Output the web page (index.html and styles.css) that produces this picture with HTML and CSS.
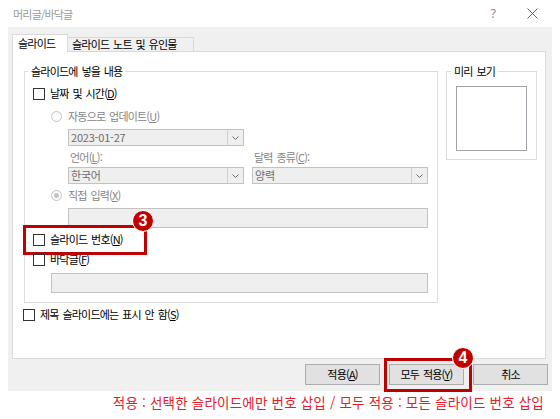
FILE: index.html
```
<!DOCTYPE html>
<html lang="ko">
<head>
<meta charset="utf-8">
<title>머리글/바닥글</title>
<link rel="stylesheet" href="styles.css">
</head>
<body>
<div class="window">
  <div class="titlebar">
    <span class="title">머리글/바닥글</span>
    <span class="help">?</span>
    <svg class="close" width="11" height="11" viewBox="0 0 11 11"><path d="M0.5 0.5 L10.5 10.5 M10.5 0.5 L0.5 10.5" stroke="#606060" stroke-width="1" fill="none"/></svg>
  </div>
  <div class="dialog">
    <div class="tabs">
      <div class="tab active">슬라이드</div>
      <div class="tab">슬라이드 노트 및 유인물</div>
    </div>
    <div class="panel">
      <div class="groups">
        <fieldset class="group content">
          <legend>슬라이드에 넣을 내용</legend>
          <div class="row r1"><span class="cb"></span><span>날짜 및 시간(<u>D</u>)</span></div>
          <div class="row r2 dis"><span class="radio"></span><span>자동으로 업데이트(<u>U</u>)</span></div>
          <div class="select date"><span class="val">2023-01-27</span><span class="arrow"><svg width="7" height="4" viewBox="0 0 7 4"><path d="M0.5 0.5 L3.5 3.5 L6.5 0.5" stroke="#6a6a6a" stroke-width="1" fill="none"/></svg></span></div>
          <div class="cal-grid">
            <span class="lab dis">언어(<u>L</u>):</span>
            <span class="lab dis">달력 종류(<u>C</u>):</span>
            <div class="select"><span class="val">한국어</span><span class="arrow"><svg width="7" height="4" viewBox="0 0 7 4"><path d="M0.5 0.5 L3.5 3.5 L6.5 0.5" stroke="#6a6a6a" stroke-width="1" fill="none"/></svg></span></div>
            <div class="select"><span class="val">양력</span><span class="arrow"><svg width="7" height="4" viewBox="0 0 7 4"><path d="M0.5 0.5 L3.5 3.5 L6.5 0.5" stroke="#6a6a6a" stroke-width="1" fill="none"/></svg></span></div>
          </div>
          <div class="row r3 dis"><span class="radio on"></span><span>직접 입력(<u>X</u>)</span></div>
          <div class="input fixed"></div>
          <div class="row r4"><span class="cb"></span><span>슬라이드 번호(<u>N</u>)</span><span class="frame frame3"></span><span class="badge badge3">3</span></div>
          <div class="row r5"><span class="cb"></span><span>바닥글(<u>F</u>)</span></div>
          <div class="input footer"></div>
        </fieldset>
        <fieldset class="group preview">
          <legend>미리 보기</legend>
          <div class="preview-box"></div>
        </fieldset>
      </div>
      <div class="row title-row"><span class="cb"></span><span>제목 슬라이드에는 표시 안 함(<u>S</u>)</span></div>
    </div>
    <div class="buttons">
      <div class="btn">적용(<u>A</u>)</div>
      <div class="btn all">모두 적용(<u>Y</u>)<span class="frame frame4"></span><span class="badge badge4">4</span></div>
      <div class="btn">취소</div>
    </div>
  </div>
  <p class="caption">적용 : 선택한 슬라이드에만 번호 삽입 / 모두 적용 : 모든 슬라이드 번호 삽입</p>
</div>
</body>
</html>
```
FILE: styles.css
```
* { box-sizing: border-box; }
html, body { margin: 0; padding: 0; background: #fff; }
body {
  width: 560px;
  height: 419px;
  overflow: hidden;
  font-family: "Noto Sans CJK KR", "Noto Sans", sans-serif;
  font-size: 11px;
  letter-spacing: -0.8px;
  word-spacing: 1.5px;
  color: #000;
}
u { text-decoration: underline; text-underline-offset: 1px; text-decoration-thickness: 1px; }

.titlebar {
  height: 27px;
  display: flex;
  align-items: center;
  padding-left: 13px;
}
.title { color: #9a9a9a; line-height: 14px; }
.help {
  margin-left: auto;
  color: #8a8a8a;
  font-family: "Noto Sans", sans-serif;
  font-size: 12px;
  letter-spacing: 0;
}
.close { margin-left: 31px; margin-right: 22px; }

.dialog {
  margin: 0 8px;
  height: 364px;
  background: #f0f0f0;
  padding: 7px 6px 0 4px;
}

.tabs { display: flex; align-items: flex-end; height: 17px; }
.tab {
  height: 14px;
  width: 126px;
  line-height: 12px;
  border-top: 1px solid #d9d9d9;
  border-right: 1px solid #d9d9d9;
  padding-left: 4px;
  background: #f0f0f0;
}
.tab.active {
  position: relative;
  z-index: 1;
  width: 56px;
  height: 18px;
  margin-bottom: -1px;
  line-height: 16px;
  background: #fff;
  border-left: 1px solid #d9d9d9;
  padding-left: 5px;
}

.panel {
  height: 308px;
  background: #fff;
  border: 1px solid #d9d9d9;
  padding: 12px 0 0 11px;
}
.groups { display: flex; align-items: flex-start; gap: 8px; }

.group {
  margin: 0;
  padding: 0;
  min-width: 0;
  border: 1px solid #dcdcdc;
  flex: none;
}
.group legend {
  padding: 0 3px;
  margin-left: 3px;
  line-height: 14px;
  height: 14px;
}
.group.content { width: 414px; padding-bottom: 9px; }
.group.preview { width: 91px; padding-bottom: 8px; }
.group.preview legend { margin-left: 4px; }
.preview-box {
  margin: 8px 0 0 9px;
  width: 71px;
  height: 65px;
  border: 1px solid #a2a2aa;
}

.row {
  position: relative;
  display: flex;
  align-items: center;
  height: 17px;
  line-height: 17px;
}
.dis { color: #858585; }
.cb {
  width: 12px;
  height: 12px;
  border: 1px solid #333;
  background: #fff;
  margin-right: 5px;
  flex: none;
}
.radio {
  width: 11px;
  height: 11px;
  border: 1px solid #c4c4c4;
  border-radius: 50%;
  background: #fbfbfb;
  margin-right: 6px;
  flex: none;
  display: flex;
  align-items: center;
  justify-content: center;
}
.radio.on::after {
  content: "";
  width: 5px;
  height: 5px;
  border-radius: 50%;
  background: #c4c4c4;
}
.r1 { margin-top: 7px; padding-left: 8px; }
.r2 { margin-top: 6px; padding-left: 26px; }
.r3 { margin-top: 3px; padding-left: 26px; }
.r4 { margin-top: 3px; padding-left: 8px; }
.r5 { margin-top: 3px; padding-left: 8px; }

.select {
  display: flex;
  width: 176px;
  height: 17px;
  border: 1px solid #c2c2c2;
  background: #efefef;
  color: #6d6d6d;
}
.select .val { flex: 1; padding-left: 2px; line-height: 15px; letter-spacing: -0.2px; }
.select .arrow {
  flex: none;
  width: 16px;
  border-left: 1px solid #cfcfcf;
  display: flex;
  align-items: center;
  justify-content: center;
}
.select.date { margin: 4px 0 0 43px; }

.cal-grid {
  display: grid;
  grid-template-columns: 176px 176px;
  grid-template-rows: 14px 17px;
  column-gap: 8px;
  row-gap: 3px;
  width: 360px;
  margin: 4px 0 0 43px;
}
.lab { display: block; line-height: 14px; padding-left: 2px; }

.input {
  height: 20px;
  border: 1px solid #c2c2c2;
  background: #efefef;
}
.input.fixed { margin: 4px 0 0 43px; width: 360px; }
.input.footer { margin: 5px 0 0 26px; width: 377px; }

.title-row { margin-top: 3px; margin-left: -1px; }

.frame {
  position: absolute;
  border: 3px solid #c00000;
  pointer-events: none;
}
.frame3 { left: -2px; top: -6px; width: 124px; height: 30px; }
.frame4 { left: -6px; top: -7px; width: 88px; height: 34px; }

.badge {
  position: absolute;
  z-index: 3;
  width: 22px;
  height: 22px;
  border-radius: 50%;
  background: #c00000;
  border: 1px solid #fff;
  color: #fff;
  font-family: "Liberation Sans", "DejaVu Sans", sans-serif;
  font-weight: bold;
  font-size: 16px;
  letter-spacing: 0;
  line-height: 20px;
  text-align: center;
}
.badge3 { left: 107px; top: -21px; }
.badge4 { left: 62px; top: -18px; }

.buttons {
  display: flex;
  justify-content: flex-end;
  gap: 9px;
  margin: 5px -2px 0 0;
}
.btn {
  position: relative;
  width: 75px;
  height: 21px;
  border: 1px solid #adadad;
  background: #e1e1e1;
  text-align: center;
  line-height: 19px;
}

.caption {
  margin: 3px 0 0;
  padding-right: 16px;
  text-align: right;
  font-size: 13.5px;
  line-height: 16px;
  letter-spacing: 0.2px;
  word-spacing: 0;
  color: #e0202a;
}
```
